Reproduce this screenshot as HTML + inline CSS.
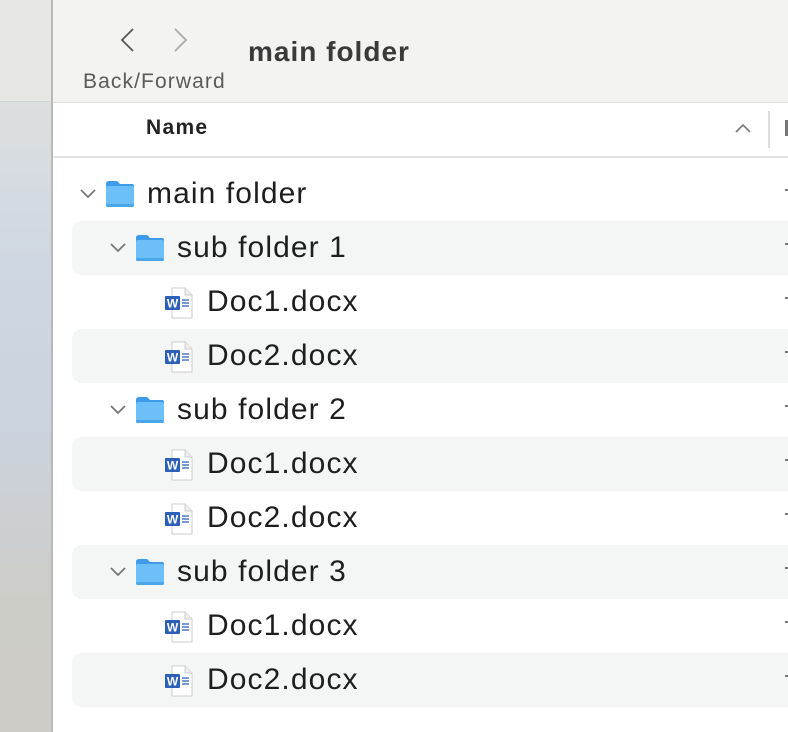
<!DOCTYPE html>
<html><head><style>
*{margin:0;padding:0;box-sizing:border-box}
body{width:788px;height:732px;overflow:hidden;background:#fff;font-family:"Liberation Sans",sans-serif;position:relative}
.sb{position:absolute;left:0;top:0;width:51px;height:732px;background:linear-gradient(#dcdfe0 102px,#cfd7e2 260px,#cbd3df 420px,#cdcdc8 600px,#cdccc6)}
.sbt{position:absolute;left:0;top:0;width:51px;height:102px;background:#e6e6e4;border-bottom:1px solid #d4d4d2}
.sbb{position:absolute;left:51px;top:0;width:2px;height:732px;background:#b9b9b7}
.tb{position:absolute;left:53px;top:0;right:0;height:103px;background:#f3f3f2;border-bottom:1px solid #dcdcdc}
.t{position:absolute;color:#333}
.hd{position:absolute;left:53px;top:103px;right:0;height:55px;border-bottom:2px solid #e3e3e3;background:#fff}
.row{position:absolute;left:72px;right:0;height:54px}
.st{background:#f4f5f5;border-radius:10px 0 0 10px}
.lbl{position:absolute;font-size:30px;letter-spacing:1.1px;color:#1e1e1e;top:10px}
.dot{position:absolute;left:713px;top:22px;width:3px;height:2px;background:#777}
</style></head><body>
<div class="sb"></div><div class="sbt"></div><div class="sbb"></div>
<div class="tb"></div>
<svg style="position:absolute;left:115px;top:26px" width="80" height="28"><path d="M18 3 L7 14 L18 25" stroke="#555" stroke-width="1.8" fill="none"/><path d="M60 3 L71 14 L60 25" stroke="#aaa" stroke-width="1.8" fill="none"/></svg>
<div class="t" style="left:83px;top:70px;font-size:21px;letter-spacing:1.1px;color:#5a5a5a">Back/Forward</div>
<div class="t" style="left:248px;top:36px;font-size:28px;letter-spacing:1px;font-weight:bold;color:#3a3a3a">main folder</div>
<div class="hd"></div>
<div class="t" style="left:146px;top:116px;font-size:21px;letter-spacing:1.3px;font-weight:bold;color:#222">Name</div>
<svg style="position:absolute;left:734px;top:122px" width="20" height="14"><path d="M2 10 L9 3 L16 10" stroke="#777" stroke-width="1.6" fill="none"/></svg>
<div style="position:absolute;left:768px;top:111px;width:2px;height:37px;background:#ddd"></div>
<div style="position:absolute;left:785px;top:120px;width:3px;height:16px;background:#777"></div>

<svg width="0" height="0" style="position:absolute"><defs>
<symbol id="f" viewBox="0 0 30 28"><path d="M1 4 Q1 1 4 1 L11 1 Q13 1 14 3 L15 4 L27 4 Q29 4 29 6 L29 8 L1 8Z" fill="#3d9be9"/><rect x="1" y="6" width="28" height="21" rx="2" fill="#6cc0f7"/><rect x="1" y="24" width="28" height="3" rx="1.5" fill="#4aa6ea"/></symbol>
<symbol id="d" viewBox="0 0 28 32"><path d="M7 1 L20 1 L27 8 L27 31 L7 31Z" fill="#fff" stroke="#ccc"/><path d="M20 1 L20 8 L27 8" fill="#eee" stroke="#ccc"/><rect x="0" y="9" width="15" height="14" rx="1" fill="#2b5fb8"/><text x="7.5" y="20.5" font-size="12" font-weight="bold" fill="#fff" text-anchor="middle" font-family="Liberation Sans">W</text><path d="M17 13h7M17 16h7M17 19h7" stroke="#2b5fb8" stroke-width="1.2"/></symbol>
<symbol id="c" viewBox="0 0 16 10"><path d="M1 1 L8 8 L15 1" stroke="#777" stroke-width="1.8" fill="none"/></symbol>
</defs></svg>

<div class="row" style="top:167px"><svg style="position:absolute;left:8px;top:22px" width="16" height="10"><use href="#c"/></svg><svg style="position:absolute;left:33px;top:13px" width="30" height="28"><use href="#f"/></svg><div class="lbl" style="left:75px">main folder</div><div class="dot"></div></div>
<div class="row st" style="top:221px"><svg style="position:absolute;left:38px;top:22px" width="16" height="10"><use href="#c"/></svg><svg style="position:absolute;left:63px;top:13px" width="30" height="28"><use href="#f"/></svg><div class="lbl" style="left:105px">sub folder 1</div><div class="dot"></div></div>
<div class="row" style="top:275px"><svg style="position:absolute;left:93px;top:12px" width="28" height="32"><use href="#d"/></svg><div class="lbl" style="left:135px">Doc1.docx</div><div class="dot"></div></div>
<div class="row st" style="top:329px"><svg style="position:absolute;left:93px;top:12px" width="28" height="32"><use href="#d"/></svg><div class="lbl" style="left:135px">Doc2.docx</div><div class="dot"></div></div>
<div class="row" style="top:383px"><svg style="position:absolute;left:38px;top:22px" width="16" height="10"><use href="#c"/></svg><svg style="position:absolute;left:63px;top:13px" width="30" height="28"><use href="#f"/></svg><div class="lbl" style="left:105px">sub folder 2</div><div class="dot"></div></div>
<div class="row st" style="top:437px"><svg style="position:absolute;left:93px;top:12px" width="28" height="32"><use href="#d"/></svg><div class="lbl" style="left:135px">Doc1.docx</div><div class="dot"></div></div>
<div class="row" style="top:491px"><svg style="position:absolute;left:93px;top:12px" width="28" height="32"><use href="#d"/></svg><div class="lbl" style="left:135px">Doc2.docx</div><div class="dot"></div></div>
<div class="row st" style="top:545px"><svg style="position:absolute;left:38px;top:22px" width="16" height="10"><use href="#c"/></svg><svg style="position:absolute;left:63px;top:13px" width="30" height="28"><use href="#f"/></svg><div class="lbl" style="left:105px">sub folder 3</div><div class="dot"></div></div>
<div class="row" style="top:599px"><svg style="position:absolute;left:93px;top:12px" width="28" height="32"><use href="#d"/></svg><div class="lbl" style="left:135px">Doc1.docx</div><div class="dot"></div></div>
<div class="row st" style="top:653px"><svg style="position:absolute;left:93px;top:12px" width="28" height="32"><use href="#d"/></svg><div class="lbl" style="left:135px">Doc2.docx</div><div class="dot"></div></div>
</body></html>
